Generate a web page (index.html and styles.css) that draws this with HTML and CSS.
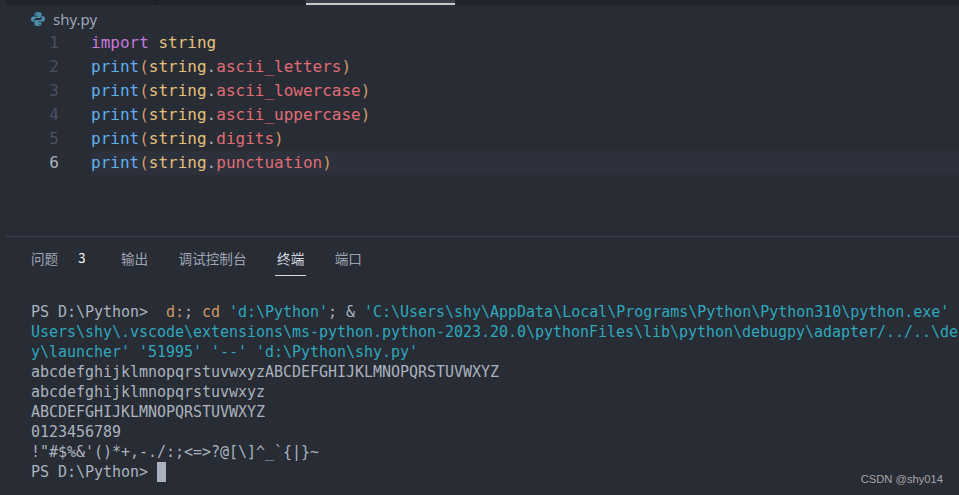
FILE: index.html
```html
<!DOCTYPE html>
<html lang="en">
<head>
  <meta charset="UTF-8">
  <meta name="viewport" content="width=device-width, initial-scale=1.0">
  <title>shy.py</title>
  <link rel="stylesheet" href="styles.css">
</head>
<body>
  <div class="tab-strip">
    <div class="tab tab-first"></div>
    <div class="tab tab-second"></div>
    <div class="tab tab-active"></div>
  </div>
  <div class="breadcrumb">
    <svg class="py-icon" viewBox="0 0 16 16" width="16" height="16">
      <path fill="#4b8fb0" d="M7.9 1C5 1 4.600 2.100 4.600 3v1.700h3.500v.7H3.100C1.800 5.400 1 6.500 1 8.100c0 1.600.8 2.700 2 2.700h1.200V9.100c0-1.200 1-2.200 2.300-2.200h3.300c1 0 1.800-.8 1.800-1.800V3c0-1.100-1-2-3.700-2zM6.200 2.100a.6.6 0 1 1 0 1.200.6.6 0 0 1 0-1.200z"/>
      <path fill="#4b8fb0" d="M8.100 15c2.900 0 3.300-1.100 3.300-2v-1.700H7.900v-.7h5c1.300 0 2.100-1.100 2.100-2.700 0-1.600-.8-2.700-2-2.700h-1.200v1.700c0 1.200-1 2.200-2.300 2.200H6.200c-1 0-1.800.8-1.800 1.800V13c0 1.100 1 2 3.700 2zm1.700-1.100a.6.6 0 1 1 0-1.200.6.6 0 0 1 0 1.200z"/>
    </svg>
    <span>shy.py</span>
  </div>
  <div class="editor">
    <div class="line"><span class="num">1</span><span class="code"><span class="kw">import</span> <span class="mod">string</span></span></div>
    <div class="line"><span class="num">2</span><span class="code"><span class="fn">print</span><span class="par">(</span><span class="mod">string</span>.<span class="attr">ascii_letters</span><span class="par">)</span></span></div>
    <div class="line"><span class="num">3</span><span class="code"><span class="fn">print</span><span class="par">(</span><span class="mod">string</span>.<span class="attr">ascii_lowercase</span><span class="par">)</span></span></div>
    <div class="line"><span class="num">4</span><span class="code"><span class="fn">print</span><span class="par">(</span><span class="mod">string</span>.<span class="attr">ascii_uppercase</span><span class="par">)</span></span></div>
    <div class="line"><span class="num">5</span><span class="code"><span class="fn">print</span><span class="par">(</span><span class="mod">string</span>.<span class="attr">digits</span><span class="par">)</span></span></div>
    <div class="line current"><span class="num">6</span><span class="code"><span class="fn">print</span><span class="par">(</span><span class="mod">string</span>.<span class="attr">punctuation</span><span class="par">)</span></span></div>
  </div>
  <div class="panel">
    <div class="panel-tabs">
      <div class="panel-tab">问题<span class="badge">3</span></div>
      <div class="panel-tab">输出</div>
      <div class="panel-tab">调试控制台</div>
      <div class="panel-tab active">终端</div>
      <div class="panel-tab">端口</div>
    </div>
    <div class="terminal">
      <div class="term-line">PS D:\Python&gt;  <span class="cmd">d:</span>; <span class="cmd">cd</span> <span class="str">'d:\Python'</span>; &amp; <span class="str">'C:\Users\shy\AppData\Local\Programs\Python\Python310\python.exe'</span></div>
      <div class="term-line str">Users\shy\.vscode\extensions\ms-python.python-2023.20.0\pythonFiles\lib\python\debugpy\adapter/../..\de</div>
      <div class="term-line str">y\launcher' '51995' '--' 'd:\Python\shy.py'</div>
      <div class="term-line">abcdefghijklmnopqrstuvwxyzABCDEFGHIJKLMNOPQRSTUVWXYZ</div>
      <div class="term-line">abcdefghijklmnopqrstuvwxyz</div>
      <div class="term-line">ABCDEFGHIJKLMNOPQRSTUVWXYZ</div>
      <div class="term-line">0123456789</div>
      <div class="term-line">!"#$%&amp;'()*+,-./:;&lt;=&gt;?@[\]^_`{|}~</div>
      <div class="term-line">PS D:\Python&gt; <span class="caret"></span></div>
    </div>
  </div>
  <div class="watermark">CSDN @shy014</div>
</body>
</html>
```

FILE: styles.css
```css
body {
  margin: 0;
  width: 959px;
  height: 495px;
  overflow: hidden;
  position: relative;
  background: #282c34;
  color: #abb2bf;
  font-family: "DejaVu Sans Mono", monospace;
}
.tab-strip {
  display: flex;
  height: 5px;
  background: #21252b;
}
.tab {
  height: 5px;
  box-sizing: border-box;
}
.tab-first {
  width: 6px;
  background: #282c34;
}
.tab-second {
  width: 150px;
  border-right: 1px solid #181a1f;
}
.tab-active {
  width: 149px;
  margin-left: 150px;
  background: #3a3f4b;
  padding-top: 3px;
}
.tab-active::before {
  content: "";
  display: block;
  height: 2px;
  background: #c8c9cb;
}
.breadcrumb {
  display: flex;
  align-items: center;
  gap: 7px;
  height: 24px;
  padding: 2px 0 0 30px;
  font-family: "Noto Sans", sans-serif;
  font-size: 15px;
  color: #9da5b4;
}
.editor {
  height: 205px;
}
.line {
  display: flex;
  height: 24px;
  line-height: 24px;
  font-size: 16px;
}
.num {
  width: 59px;
  padding-right: 32px;
  text-align: right;
  color: #495162;
}
.code {
  flex: 1;
  white-space: pre;
}
.current .num {
  color: #abb2bf;
}
.current .code {
  background: #2c313c;
}
.kw { color: #c678dd; }
.fn { color: #61afef; }
.mod { color: #e5c07b; }
.attr { color: #e06c75; }
.par { color: #d19a66; }
.panel {
  margin-left: 6px;
  border-top: 1px solid #3e4452;
}
.panel-tabs {
  display: flex;
  gap: 30.5px;
  height: 42px;
  padding-left: 25px;
  font-family: "Noto Sans CJK SC", sans-serif;
  font-size: 13.6px;
}
.panel-tab {
  display: flex;
  align-items: center;
  height: 39px;
  padding-top: 3px;
  color: #9da5b4;
  border-bottom: 1px solid transparent;
  box-sizing: border-box;
}
.panel-tab.active {
  color: #d7dae0;
  border-bottom-color: #d7dae0;
  padding-left: 2px;
  padding-right: 2px;
  margin: 0 -2px;
}
.badge {
  margin: 0 5px 0 20px;
  color: #fff;
  font-size: 13px;
}
.terminal {
  padding: 23px 0 0 25px;
  font-size: 15px;
  line-height: 20px;
  letter-spacing: -0.03px;
}
.term-line {
  height: 20px;
  white-space: pre;
}
.cmd { color: #d19a66; }
.str { color: #2fa7bd; }
.caret {
  display: inline-block;
  width: 9px;
  height: 20px;
  vertical-align: -5px;
  background: #abb2bf;
}
.watermark {
  position: absolute;
  right: 16px;
  bottom: 10px;
  font-family: "Liberation Sans", sans-serif;
  font-size: 11.2px;
  color: #a6a6a6;
}
```
